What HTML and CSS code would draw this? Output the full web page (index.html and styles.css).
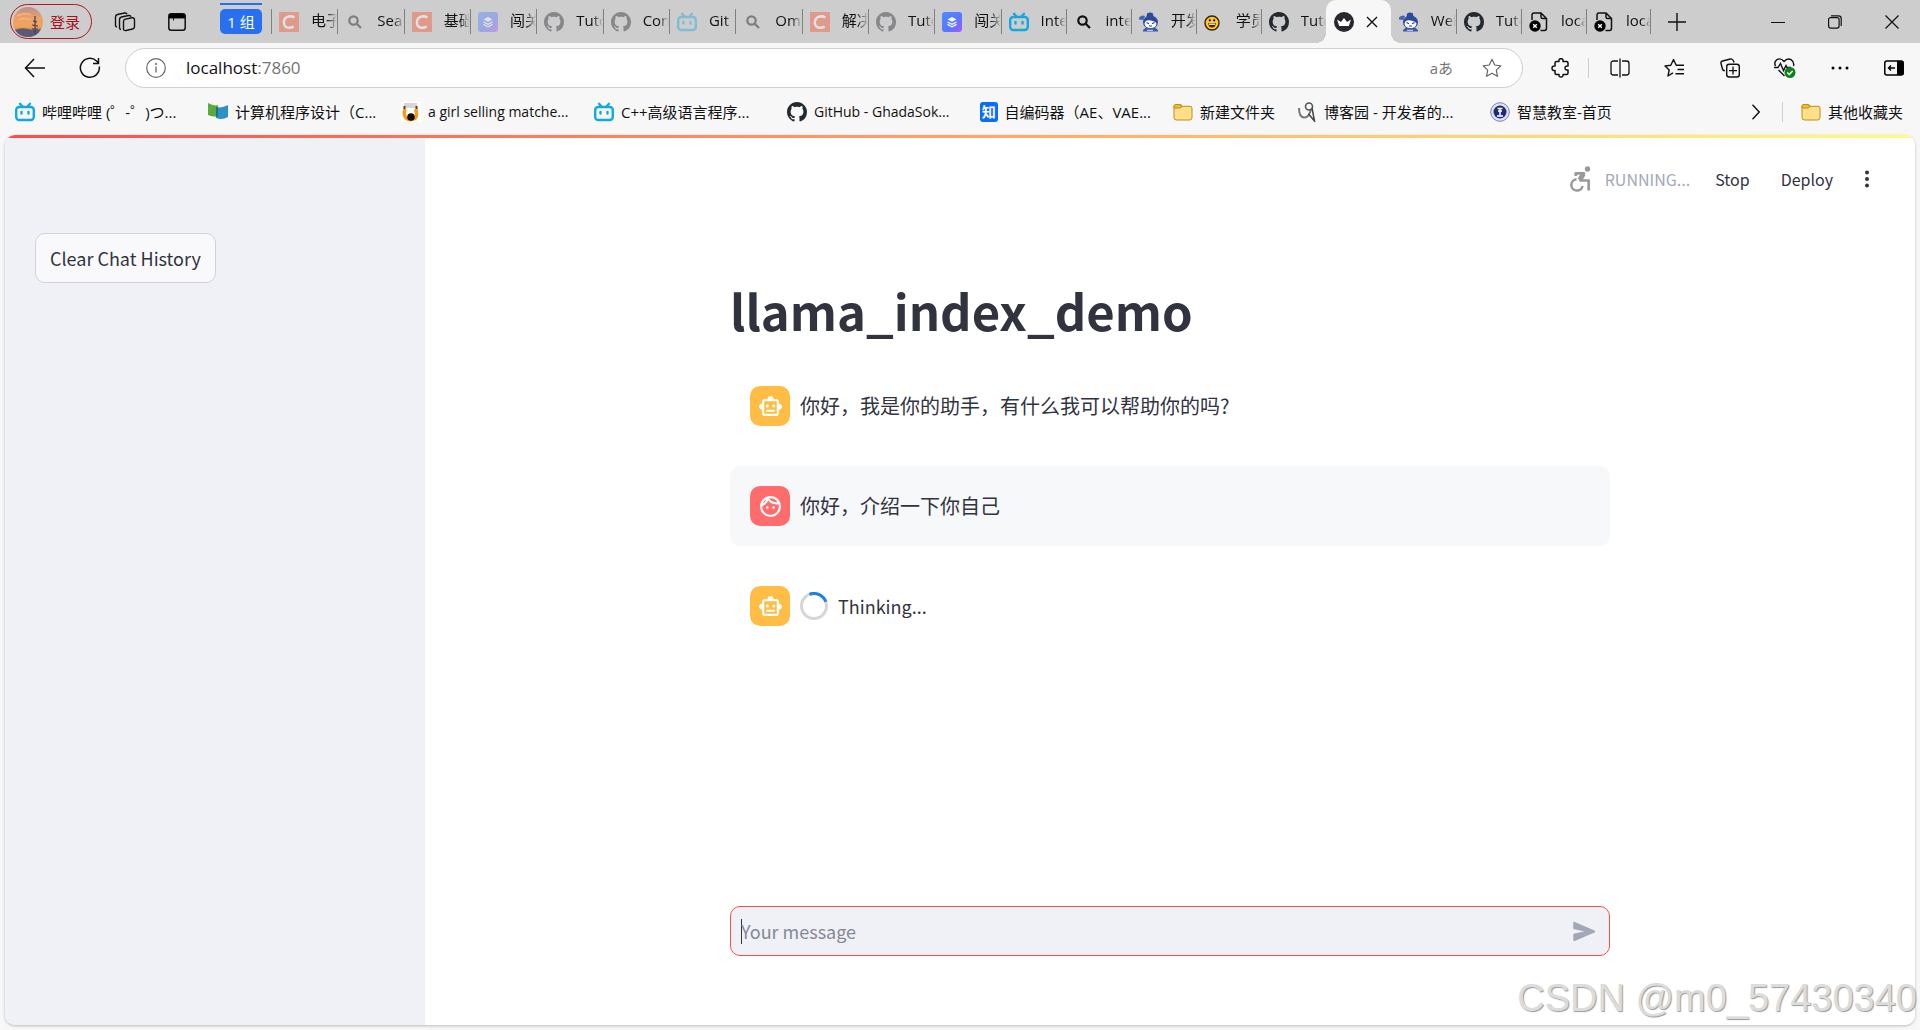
FILE: index.html
```html
<!DOCTYPE html>
<html lang="zh-CN">
<head>
<meta charset="utf-8">
<title>llama_index_demo</title>
<link rel="stylesheet" href="styles.css">
</head>
<body>
<svg class="defs" aria-hidden="true">
  <symbol id="i-github" viewBox="0 0 16 16"><path fill="#24292f" d="M8 0C3.58 0 0 3.58 0 8c0 3.54 2.29 6.53 5.47 7.59.4.07.55-.17.55-.38 0-.19-.01-.82-.01-1.49-2.01.37-2.53-.49-2.69-.94-.09-.23-.48-.94-.82-1.13-.28-.15-.68-.52-.01-.53.63-.01 1.08.58 1.23.82.72 1.21 1.87.87 2.33.66.07-.52.28-.87.51-1.07-1.78-.2-3.64-.89-3.64-3.95 0-.87.31-1.59.82-2.15-.08-.2-.36-1.02.08-2.12 0 0 .67-.21 2.2.82.64-.18 1.32-.27 2-.27s1.36.09 2 .27c1.53-1.04 2.2-.82 2.2-.82.44 1.1.16 1.92.08 2.12.51.56.82 1.27.82 2.15 0 3.07-1.87 3.75-3.65 3.95.29.25.54.73.54 1.48 0 1.07-.01 1.93-.01 2.2 0 .21.15.46.55.38A8.01 8.01 0 0 0 16 8c0-4.42-3.58-8-8-8z"/></symbol>
  <symbol id="i-csdn" viewBox="0 0 20 20"><path fill="#fc5531" d="M0 0h20v20H0z"/><path d="M15.500 5.500Q13.500 4.300 11 4.300Q5 4.800 4.800 10.500Q5 15.700 10 15.700Q12.500 15.700 14.700 14.600" fill="none" stroke="#fff" stroke-width="2.400"/></symbol>
  <symbol id="i-search" viewBox="0 0 20 20"><g fill="none" stroke="#111" stroke-width="2.200"><circle cx="8.500" cy="8.500" r="4.200"/><path d="M11.700 11.700L16 16"/></g></symbol>
  <symbol id="i-layers" viewBox="0 0 20 20"><defs><linearGradient id="g-layers" x1="0" y1="0" x2="1" y2="1"><stop offset="0" stop-color="#4d8dff"/><stop offset=".55" stop-color="#5577ff"/><stop offset="1" stop-color="#a35bff"/></linearGradient></defs><rect width="20" height="20" rx="3" fill="url(#g-layers)"/><path d="M10 5l4.500 2.400-4.500 2.400-4.500-2.400z" fill="#fff"/><path d="M5.500 10l4.500 2.400 4.500-2.400M5.500 12.400l4.500 2.400 4.500-2.400" fill="none" stroke="#fff" stroke-width="1.200"/></symbol>
  <symbol id="i-bili" viewBox="0 0 20 20"><g fill="none" stroke="#12a9de" stroke-width="2.400" stroke-linecap="round"><rect x="1.200" y="5" width="17.600" height="13" rx="3"/><path d="M5 1.800L7.500 4.500M15 1.800L12.500 4.500M6.500 10v1.500M13.500 10v1.500"/></g></symbol>
  <symbol id="i-avatar" viewBox="0 0 20 20"><path d="M8 1.500Q11-.5 14 1.500L14.500 5h-7z" fill="#2d4a9e"/><ellipse cx="11.500" cy="10.200" rx="7.500" ry="6.700" fill="#2d4a9e"/><path d="M0 5.500Q3 2.500 6 4L4.500 8 0 7.500z" fill="#4663b4"/><path d="M5.500 11.500Q6.500 7.500 11.500 8.500T17.500 11.500Q17 16 11.500 16T5.500 11.500z" fill="#fff"/><path d="M7.500 10.500l2.500 1.300M15.500 10.500l-2.500 1.300M10 14h3" stroke="#24408f" stroke-width="1.100"/><path d="M4 18l3-2.500q4.500 1.800 9 0l3 2.500v1.500H4z" fill="#3c58a6"/><path d="M8 18.300h6" stroke="#d5dcf0"/></symbol>
  <symbol id="i-smile" viewBox="0 0 20 20"><circle cx="8" cy="11" r="7" fill="#ffc928" stroke="#332400" stroke-width="1.400"/><path d="M4 11h8q-.5 4.500-4 4.500T4 11z" fill="#4b2200"/><path d="M4.800 11.500h6.400v1.300H4.800z" fill="#fff"/><circle cx="5.800" cy="8.300" r="1.100"/><circle cx="10.200" cy="8.300" r="1.100"/></symbol>
  <symbol id="i-crown" viewBox="0 0 20 20"><circle cx="10" cy="10" r="10" fill="#262730"/><path d="M3 7.500l4 2.500L10 6l3 4 4-2.500-2.200 6.500H5.200z" fill="#fff"/></symbol>
  <symbol id="i-file" viewBox="0 0 20 20"><path d="M3 8V3.200Q3 1 5 1h7l5.500 5.500V16q0 2.500-2 2.500h-4M12 1v4q0 1.500 1.500 1.500h4" fill="none" stroke="#111" stroke-width="1.500"/><circle cx="6" cy="14" r="5.700" fill="#000"/><path d="M4.200 12.200l3.600 3.600M7.800 12.200l-3.600 3.600" stroke="#fff" stroke-width="1.400"/></symbol>
  <symbol id="i-folder" viewBox="0 0 20 20"><path d="M1 15.500V4.500q0-2 2-2h4q1.500 0 2 1.800h8q2 0 2 2v9.200q0 2.500-2.500 2.500h-13Q1 18 1 15.500z" fill="#ffdf87" stroke="#b98d1e"/><path d="M1 6V4.500q0-2 2-2h4Q9 3.500 8.500 5L7.500 6z" fill="#f3bd32" stroke="#b98d1e"/></symbol>
  <symbol id="i-robot" viewBox="0 0 24 24"><path fill="#fff" d="M20 9V7c0-1.100-.9-2-2-2h-3c0-1.660-1.340-3-3-3S9 3.340 9 5H6c-1.100 0-2 .9-2 2v2c-1.660 0-3 1.340-3 3s1.340 3 3 3v4c0 1.100.9 2 2 2h12c1.100 0 2-.9 2-2v-4c1.660 0 3-1.340 3-3s-1.340-3-3-3zm-2 10H6V7h12v12zm-9-6c-.83 0-1.500-.67-1.500-1.500S8.170 10 9 10s1.500.67 1.500 1.500S9.830 13 9 13zm7.500-1.500c0 .83-.67 1.500-1.500 1.500s-1.500-.67-1.500-1.500.67-1.500 1.500-1.500 1.500.67 1.500 1.500zM8 15h8v2H8v-2z"/></symbol>
</svg>

<header class="chrome">
  <div class="tabstrip">
    <button class="profile">
      <svg width="30" height="30" viewBox="0 0 30 30"><defs><linearGradient id="g-sky" x1="0" y1="0" x2="0" y2="1"><stop offset="0" stop-color="#b98f92"/><stop offset=".35" stop-color="#e9a06a"/><stop offset=".65" stop-color="#f2a35c"/><stop offset="1" stop-color="#5b5268"/></linearGradient></defs><circle cx="15" cy="15" r="15" fill="url(#g-sky)"/><path d="M4 9q8-4 14-1M6 13q6-3 11 0" stroke="#ffb36b" fill="none" stroke-width="1.500"/><path d="M2 23q6-3 13-1t13 0q-4 8-13 8T2 23z" fill="#5c5a72"/><path d="M22 9v18M20 14l4 1M19 18l6 1M19 22h6" stroke="#413c50" stroke-width="1.200"/></svg>
      <span>登录</span>
    </button>
    <button class="strip-btn" aria-label="工作区"><svg width="22" height="22" viewBox="0 0 22 22"><g fill="none" stroke="#111" stroke-width="1.400"><path d="M9.500 10.500q0-2 2-2.400l6.500-1.300q2.500-.4 2.500 1.900v7q0 1.800-2 2.300l-6.500 1.500q-2.500.5-2.500-2zM5.500 17V8.500q0-2 2-2.500l7-1.500q2-.4 2.500 1.200M1.500 14.500V6q0-2 2-2.500l7-1.500q2-.4 2.500 1.200M5.500 17q0 1.200 1.500 1.500M1.500 14.500q0 1.200 1.500 1.500"/></g></svg></button>
    <button class="strip-btn" aria-label="标签页操作"><svg width="18" height="18" viewBox="0 0 18 18"><rect x=".8" y=".8" width="16.400" height="16.400" rx="2.500" fill="none" stroke="#111" stroke-width="1.500"/><path d="M1 5V3q0-2 2-2h12q2 0 2 2v2z"/><path d="M5.500 5v2.500M1 5h16" stroke="#111"/></svg></button>
    <button class="group-label">1 组</button>
    <nav class="tabs">
      <div class="tabset tabset-grouped">
        <a href="#" class="tab asleep"><svg><use href="#i-csdn"/></svg><span>电子</span></a>
        <a href="#" class="tab asleep"><svg><use href="#i-search"/></svg><span>Sea</span></a>
        <a href="#" class="tab asleep"><svg><use href="#i-csdn"/></svg><span>基础</span></a>
        <a href="#" class="tab asleep"><svg><use href="#i-layers"/></svg><span>闯关</span></a>
        <a href="#" class="tab asleep"><svg><use href="#i-github"/></svg><span>Tuto</span></a>
        <a href="#" class="tab asleep"><svg><use href="#i-github"/></svg><span>Con</span></a>
        <a href="#" class="tab asleep"><svg><use href="#i-bili"/></svg><span>Git 下</span></a>
        <a href="#" class="tab asleep"><svg><use href="#i-search"/></svg><span>Om</span></a>
        <a href="#" class="tab asleep"><svg><use href="#i-csdn"/></svg><span>解决</span></a>
        <a href="#" class="tab asleep"><svg><use href="#i-github"/></svg><span>Tuto</span></a>
        <a href="#" class="tab"><svg><use href="#i-layers"/></svg><span>闯关</span></a>
      </div>
      <div class="tabset tabset-loose">
        <a href="#" class="tab"><svg><use href="#i-bili"/></svg><span>Inte</span></a>
        <a href="#" class="tab"><svg><use href="#i-search"/></svg><span>inte</span></a>
        <a href="#" class="tab"><svg><use href="#i-avatar"/></svg><span>开发</span></a>
        <a href="#" class="tab"><svg><use href="#i-smile"/></svg><span>学员</span></a>
        <a href="#" class="tab"><svg><use href="#i-github"/></svg><span>Tuto</span></a>
        <div class="tab active"><svg><use href="#i-crown"/></svg><button aria-label="关闭标签页"><svg viewBox="0 0 12 12"><path d="M1 1l10 10M11 1L1 11" stroke="#111" stroke-width="1.400"/></svg></button></div>
        <a href="#" class="tab"><svg><use href="#i-avatar"/></svg><span>Wel</span></a>
        <a href="#" class="tab"><svg><use href="#i-github"/></svg><span>Tuto</span></a>
        <a href="#" class="tab"><svg><use href="#i-file"/></svg><span>loca</span></a>
        <a href="#" class="tab"><svg><use href="#i-file"/></svg><span>loca</span></a>
      </div>
    </nav>
    <button class="new-tab" aria-label="新建标签页"><svg width="18" height="18" viewBox="0 0 18 18"><path d="M9 0v18M0 9h18" stroke="#111" stroke-width="1.400"/></svg></button>
    <div class="window-controls">
      <button aria-label="最小化"><svg width="14" height="14" viewBox="0 0 14 14"><path d="M0 7.500h14" stroke="#111"/></svg></button>
      <button aria-label="还原"><svg width="14" height="14" viewBox="0 0 14 14"><g fill="none" stroke="#111" stroke-width="1.200"><rect x=".6" y="2.600" width="10.500" height="10.500" rx="2"/><path d="M3 .8h7.500q2.700 0 2.700 2.700V11"/></g></svg></button>
      <button aria-label="关闭"><svg width="14" height="14" viewBox="0 0 14 14"><path d="M.5.500l13 13M13.500.500l-13 13" stroke="#111" stroke-width="1.200"/></svg></button>
    </div>
  </div>

  <div class="toolbar">
    <button class="nav-btn" aria-label="返回"><svg width="22" height="20" viewBox="0 0 22 20"><path d="M10 1L1.500 10l8.500 9M1.500 10H21" fill="none" stroke="#111" stroke-width="1.500"/></svg></button>
    <button class="nav-btn" aria-label="刷新"><svg width="22" height="22" viewBox="0 0 22 22"><path d="M20.300 9.500A9.500 9.500 0 1 1 17.500 4l2 2M19.500 1v5.500H14" fill="none" stroke="#111" stroke-width="1.500"/></svg></button>
    <form class="address">
      <button type="button" aria-label="查看站点信息"><svg width="20" height="20" viewBox="0 0 20 20"><circle cx="10" cy="10" r="9.300" fill="none" stroke="#666" stroke-width="1.200"/><path d="M10 8.500V14.500" stroke="#666" stroke-width="1.300"/><circle cx="10" cy="6" r="1" fill="#666"/></svg></button>
      <a href="http://localhost:7860" class="url">localhost<span>:7860</span></a>
      <button type="button" class="translate">aあ</button>
      <button type="button" aria-label="收藏"><svg width="20" height="20" viewBox="0 0 20 20"><path d="M10 1.300l2.700 5.700 6.200.8-4.600 4.300 1.200 6.200-5.500-3-5.500 3 1.200-6.200L1.100 7.800 7.300 7z" fill="none" stroke="#666" stroke-width="1.200" stroke-linejoin="round"/></svg></button>
    </form>
    <div class="tools">
      <button aria-label="扩展"><svg width="20" height="20" viewBox="0 0 20 20"><path d="M4 5q0-1.500 1.500-1.500H8q-.5-2.800 2-2.800t2 2.800h3.500Q17 3.500 17 5v3q-3-.3-3 2t3 2v3q0 1.500-1.500 1.500H12q.3 2.500-2 2.500t-2-2.500H5.500Q4 16.500 4 15v-2.500Q1 13 1 10.300T4 8z" fill="none" stroke="#111" stroke-width="1.500" stroke-linejoin="round"/></svg></button>
      <i class="rule"></i>
      <button aria-label="分屏"><svg width="20" height="20" viewBox="0 0 20 20"><path d="M8 3H3.500Q1 3 1 5.500v9Q1 17 3.500 17H8M12 3h4.500Q19 3 19 5.500v9q0 2.500-2.500 2.500H12M10 .5v19" fill="none" stroke="#111" stroke-width="1.300"/></svg></button>
      <button aria-label="收藏夹"><svg width="21" height="20" viewBox="0 0 21 20"><path d="M9 14.800L4 18l1.200-6L1 8l5.800-.8L9.500 1.500 12.200 7.200H20M13.500 11.500H20M11.500 15.800H20" fill="none" stroke="#111" stroke-width="1.400" stroke-linejoin="round"/></svg></button>
      <button aria-label="集锦"><svg width="20" height="20" viewBox="0 0 20 20"><path d="M5 12.500Q3 13 2.500 11L1 5.500Q.5 3.500 2.500 3l8-2q2-.5 3 2l.5 1.500" fill="none" stroke="#111" stroke-width="1.400"/><rect x="6.700" y="6.200" width="12.600" height="12.800" rx="2.500" fill="none" stroke="#111" stroke-width="1.400"/><path d="M13 8.500v8M9 12.600h8" stroke="#111" stroke-width="1.300"/></svg></button>
      <button aria-label="浏览器概要"><svg width="22" height="20" viewBox="0 0 22 20"><path d="M1.500 8Q-.5 4 3 1.700t7 1.800Q13.500-.5 17 1.700t2.500 6.300M4.500 12l6 6M0 9.500h4l2.500-4 3 7 2.500-5 1 2h4" fill="none" stroke="#111" stroke-width="1.400"/><circle cx="16" cy="14.500" r="5.500" fill="#13801b"/><path d="M13.300 14.600l2 2 3.300-3.500" fill="none" stroke="#fff" stroke-width="1.400"/></svg></button>
      <button aria-label="设置及其他"><svg width="18" height="4" viewBox="0 0 18 4"><circle cx="2" cy="2" r="1.500"/><circle cx="9" cy="2" r="1.500"/><circle cx="16" cy="2" r="1.500"/></svg></button>
      <button class="side-btn" aria-label="边栏"><svg width="20" height="16" viewBox="0 0 20 16"><rect x=".8" y="1" width="18.400" height="14" rx="2" fill="none" stroke="#000" stroke-width="1.500"/><path d="M13 1h5q1.500 0 1.500 1.500v11q0 1.500-1.500 1.500h-5z"/><path d="M11 8H4.500M7 5.500L4.500 8 7 10.500" fill="none" stroke="#000" stroke-width="1.400"/></svg></button>
    </div>
  </div>

  <nav class="bookmarks">
    <a href="#" class="bookmark"><svg><use href="#i-bili"/></svg><span>哔哩哔哩 (゜-゜)つ...</span></a>
    <a href="#" class="bookmark"><svg viewBox="0 0 20 20"><path d="M0 1q6 3.500 10 2v11q-4 1.500-10-1z" fill="#5aab3c"/><path d="M8 5q6 1.500 12-2v12q-6 3.500-12 1z" fill="#2f8fc9"/><path d="M8 5h2v9l-2 1z" fill="#23707e"/></svg><span>计算机程序设计（C...</span></a>
    <a href="#" class="bookmark latin"><svg viewBox="0 0 20 20"><path fill="#fff" d="M0 0h20v20H0z"/><path d="M3 1h13v5H3z" fill="#d6d6d6"/><path d="M4 7q-2 6 1 9t9 .5q3-3 .5-9.500" fill="none" stroke="#f39a16" stroke-width="3.500"/><path d="M3.500 4v3M15.500 4v3" stroke="#6b3b18" stroke-width="2"/><circle cx="10" cy="15" r="3.800" fill="#160b08"/></svg><span>a girl selling matche...</span></a>
    <a href="#" class="bookmark"><svg><use href="#i-bili"/></svg><span>C++高级语言程序...</span></a>
    <a href="#" class="bookmark latin"><svg><use href="#i-github"/></svg><span>GitHub - GhadaSok...</span></a>
    <a href="#" class="bookmark"><b class="zhihu">知</b><span>自编码器（AE、VAE...</span></a>
    <a href="#" class="bookmark short"><svg><use href="#i-folder"/></svg><span>新建文件夹</span></a>
    <a href="#" class="bookmark"><svg viewBox="0 0 20 20"><path d="M2 6q0 9 5 9.500T14 7" fill="none" stroke="#777" stroke-width="2"/><circle cx="12" cy="4.500" r="3.500" fill="none" stroke="#555" stroke-width="1.600"/><path d="M15 6l2.500 13-6-7" fill="none" stroke="#444" stroke-width="1.500"/></svg><span>博客园 - 开发者的...</span></a>
    <a href="#" class="bookmark short"><svg viewBox="0 0 20 20"><circle cx="10" cy="10" r="9.300" fill="#dfe4f3" stroke="#7783b5"/><circle cx="10" cy="10" r="6.500" fill="#1d2c74"/><path d="M7.500 6.500h5M10 6v7.500M7 14h6M8 9h4" stroke="#fff" stroke-width="1.500"/></svg><span>智慧教室-首页</span></a>
    <button class="more-bookmarks" aria-label="更多收藏"><svg width="8" height="16" viewBox="0 0 8 16"><path d="M.5.800L7.200 8 .5 15.200" fill="none" stroke="#111" stroke-width="1.400"/></svg></button>
    <i class="rule"></i>
    <a href="#" class="bookmark short"><svg><use href="#i-folder"/></svg><span>其他收藏夹</span></a>
  </nav>
</header>

<div class="viewport">
  <div class="decoration"></div>
  <div class="app">
    <aside class="sidebar"><button class="clear-btn">Clear Chat History</button></aside>
    <main class="main">
      <div class="app-header">
        <div class="status">
          <svg width="21" height="26" viewBox="0 0 21 26"><g fill="none" stroke="#999"><path d="M6.500 13.200A5.700 5.700 0 1 0 12.600 20" stroke-width="2.500"/><path d="M5.700 10V7.300H14L10.500 14.500H18.700V24.500" stroke-width="2.700" stroke-linejoin="round"/><path d="M13.200 8l-3.400 6" stroke-width="5"/></g><circle cx="17.500" cy="3" r="2.700" fill="#999"/></svg>
          <span>RUNNING...</span>
        </div>
        <button class="stop">Stop</button>
        <button class="deploy">Deploy</button>
        <button class="menu" aria-label="Menu"><svg width="4" height="18" viewBox="0 0 4 18"><g fill="#31333f"><circle cx="2" cy="2.500" r="2"/><circle cx="2" cy="9" r="2"/><circle cx="2" cy="15.500" r="2"/></g></svg></button>
      </div>
      <section class="chat">
        <h1>llama_index_demo</h1>
        <div class="message"><span class="avatar bot"><svg><use href="#i-robot"/></svg></span><p>你好，我是你的助手，有什么我可以帮助你的吗?</p></div>
        <div class="message user"><span class="avatar human"><svg viewBox="0 0 24 24"><path fill="#fff" d="M10.250 13c0 .69-.56 1.250-1.250 1.250S7.750 13.690 7.750 13s.56-1.250 1.250-1.250 1.250.56 1.250 1.250zM15 11.750c-.69 0-1.250.56-1.250 1.250s.56 1.250 1.250 1.250 1.250-.56 1.250-1.250-.56-1.250-1.250-1.250zm7 .25c0 5.520-4.480 10-10 10S2 17.520 2 12 6.480 2 12 2s10 4.480 10 10zM10.660 4.120C12.060 6.440 14.600 8 17.500 8c.46 0 .91-.05 1.340-.12C17.440 5.560 14.900 4 12 4c-.46 0-.91.05-1.340.12zM4.420 9.470a8.046 8.046 0 0 0 3.660-4.440 8.046 8.046 0 0 0-3.660 4.440zM20 12c0-.78-.12-1.530-.33-2.240-.7.15-1.420.24-2.170.24a10 10 0 0 1-7.760-3.690A10.016 10.016 0 0 1 4 11.860c.01.04 0 .09 0 .14 0 4.410 3.590 8 8 8s8-3.590 8-8z"/></svg></span><p>你好，介绍一下你自己</p></div>
        <div class="message"><span class="avatar bot"><svg><use href="#i-robot"/></svg></span><svg class="spinner" viewBox="0 0 28 28"><circle cx="14" cy="14" r="12.500" fill="none" stroke="#d6d6d9" stroke-width="3"/><path d="M9.500 2.300A12.500 12.500 0 0 1 25.800 9.800" fill="none" stroke="#1c83e1" stroke-width="3"/></svg><p class="latin-text">Thinking...</p></div>
      </section>
      <form class="composer">
        <i class="caret"></i>
        <input type="text" placeholder="Your message" aria-label="Your message">
        <button type="button" aria-label="Send"><svg width="27" height="27" viewBox="0 0 24 24"><path fill="#a3a8b8" d="M3.400 20.400l17.450-7.480a1 1 0 0 0 0-1.840L3.400 3.600a.993.993 0 0 0-1.390.91L2 9.120c0 .5.370.93.870.99L12 12 2.870 13.880c-.5.07-.87.5-.87 1l.01 4.610c0 .71.73 1.200 1.390.91z"/></svg></button>
      </form>
    </main>
  </div>
</div>
<div class="watermark">CSDN @m0_57430340</div>
</body>
</html>
```
FILE: styles.css
```css
* { box-sizing: border-box; }
html, body { height: 100%; }
body {
  margin: 0;
  display: flex;
  flex-direction: column;
  background: #f7f7f7;
  color: #111;
  font: 15px/20px "Open Sans", "Noto Sans CJK SC", sans-serif;
  overflow: hidden;
}
button { border: 0; padding: 0; margin: 0; background: none; color: inherit; font: inherit; display: flex; align-items: center; justify-content: center; }
a { color: inherit; text-decoration: none; }
svg { display: block; flex: none; }
.defs { position: absolute; width: 0; height: 0; }

/* Tab strip */
.tabstrip { display: flex; height: 43px; background: #cdcdcd; padding-left: 10px; }
.profile { width: 82px; height: 35px; margin-top: 4px; border: 1px solid #b3141d; border-radius: 18px; justify-content: flex-start; gap: 7px; padding-left: 2px; color: #a80f1a; }
.strip-btn { width: 52px; margin-left: 7px; }
.strip-btn + .strip-btn { margin-left: 0; }
.group-label { position: relative; align-self: flex-start; width: 42px; height: 25px; margin: 9px 9px 0 17px; border-radius: 5px; background: #2870f0; color: #fff; }
.group-label::before { content: ""; position: absolute; inset: -6px 0 auto; height: 2px; background: #2870f0; }
.tabs { display: flex; flex: 1; min-width: 0; }
.tabset { display: flex; min-width: 0; }
.tabset-grouped { flex: 729; }
.tabset-loose { flex: 650; }
.tab { position: relative; flex: 1 1 0; min-width: 0; display: flex; align-items: center; padding: 0 0 0 8px; gap: 12px; }
.tab > svg { width: 20px; height: 20px; }
.tab > span { flex: 1; overflow: hidden; white-space: nowrap; margin-top: -3px; font-size: 15px; -webkit-mask-image: linear-gradient(90deg, #000 60%, transparent); mask-image: linear-gradient(90deg, #000 60%, transparent); }
.tab::before { content: ""; position: absolute; left: 0; top: 9px; width: 1px; height: 25px; background: #808080; }
.tabset-loose .tab:last-child::after { content: ""; position: absolute; right: 0; top: 9px; width: 1px; height: 25px; background: #808080; }
.tab.asleep > svg { opacity: .42; }
.tab.active { background: #f7f7f7; border-radius: 10px 10px 0 0; z-index: 1; }
.tab.active::before, .tab.active::after { top: auto; bottom: 0; width: 10px; height: 10px; content: ""; position: absolute; }
.tab.active::before { left: -10px; background: radial-gradient(circle at 0 0, transparent 10px, #f7f7f7 10px); }
.tab.active::after { right: -10px; background: radial-gradient(circle at 100% 0, transparent 10px, #f7f7f7 10px); }
.tab.active + .tab::before { display: none; }
.tab.active button svg { width: 12px; height: 12px; }
.new-tab { width: 52px; }
.window-controls { display: flex; padding-left: 46px; }
.window-controls button { width: 57px; }

/* Toolbar */
.toolbar { display: flex; align-items: center; padding: 5px 0 5px 7px; }
.nav-btn { width: 55px; height: 36px; }
.address { flex: 1; display: flex; align-items: center; height: 40px; margin-left: 8px; padding: 0 20px; border: 1px solid #cfcfcf; border-radius: 20px; background: #fff; }
.url { flex: 1; margin-left: 20px; font-size: 17px; color: #111; }
.url span { color: #757575; }
.translate { color: #757575; font-size: 15px; margin-right: 29px; }
.tools { display: flex; align-items: center; margin-left: 10px; }
.tools button { width: 55px; height: 36px; }
.tools .side-btn { width: 53px; }
.tools .rule { margin-right: 3px; }
.rule { width: 1px; height: 20px; background: #cfcfcf; }

/* Bookmarks */
.bookmarks { display: flex; align-items: center; gap: 22px; height: 42px; padding: 0 17px 4px 15px; }
.bookmark { display: flex; align-items: center; gap: 7px; width: 171px; white-space: nowrap; }
.bookmark svg, .zhihu { width: 20px; height: 20px; }
.bookmark.short { width: auto; }
.bookmark.latin { font-size: 14px; }
.zhihu { border-radius: 3px; background: #0a6cff; color: #fff; font-size: 14px; text-align: center; }
.more-bookmarks { margin-left: auto; }
.bookmarks .rule { margin-right: -4px; }

/* Page */
.viewport { flex: 1; min-height: 0; margin: 0 5px 5px; display: flex; flex-direction: column; border-radius: 10px; background: #fff; overflow: hidden; box-shadow: 0 1px 3px rgba(0, 0, 0, .25); }
.decoration { height: 3px; background: linear-gradient(90deg, #ff4b4b, #fffd80); }
.app { flex: 1; min-height: 0; display: flex; color: #31333f; font-family: "Noto Sans CJK SC", sans-serif; font-size: 18px; line-height: 32px; }
.sidebar { width: 420px; background: #f0f1f6; padding: 95px 30px; }
.clear-btn { height: 50px; padding: 0 14px; border: 1px solid #d2d3d9; border-radius: 10px; background: #f9f9fb; }
.main { flex: 1; display: flex; flex-direction: column; background: #fff; }
.app-header { display: flex; align-items: center; justify-content: flex-end; height: 82px; padding-right: 46px; font-size: 16px; }
.status { display: flex; align-items: center; gap: 14px; color: #a3a8b8; margin-right: 25px; }
.stop { margin-right: 31px; }
.deploy { margin-right: 32px; }
.chat, .composer { width: 880px; max-width: 100%; margin: 0 auto; }
.chat { flex: 1; padding-top: 52px; }
h1 { margin: 0 0 18px; font-size: 49px; line-height: 76px; font-weight: 700; }
.message { display: flex; align-items: center; gap: 10px; padding: 20px; margin-bottom: 20px; border-radius: 10px; }
.message p { margin: 0; font-size: 20px; }
.message .latin-text { font-size: 18px; }
.user { background: #f7f8fa; }
.avatar { display: flex; align-items: center; justify-content: center; width: 40px; height: 40px; border-radius: 10px; }
.avatar svg { width: 25px; height: 25px; }
.bot { background: #ffbd45; }
.human { background: #ff6c6c; }
.spinner { width: 28px; height: 28px; }
.composer { display: flex; align-items: center; height: 50px; margin-bottom: 69px; padding: 0 11px 0 10px; border: 1px solid #ff4b4b; border-radius: 10px; background: #f0f1f6; }
.caret { width: 1px; height: 25px; margin-right: -1px; background: #31333f; }
.composer input { flex: 1; min-width: 0; border: 0; outline: 0; padding: 0; background: none; color: #31333f; font: inherit; }
.composer input::placeholder { color: #858897; opacity: 1; }

.watermark { position: absolute; right: 3px; bottom: 10px; font: 38px/44px "Liberation Sans", sans-serif; color: #dcdcdc; text-shadow: 1px 1px 1px #999; }
```
